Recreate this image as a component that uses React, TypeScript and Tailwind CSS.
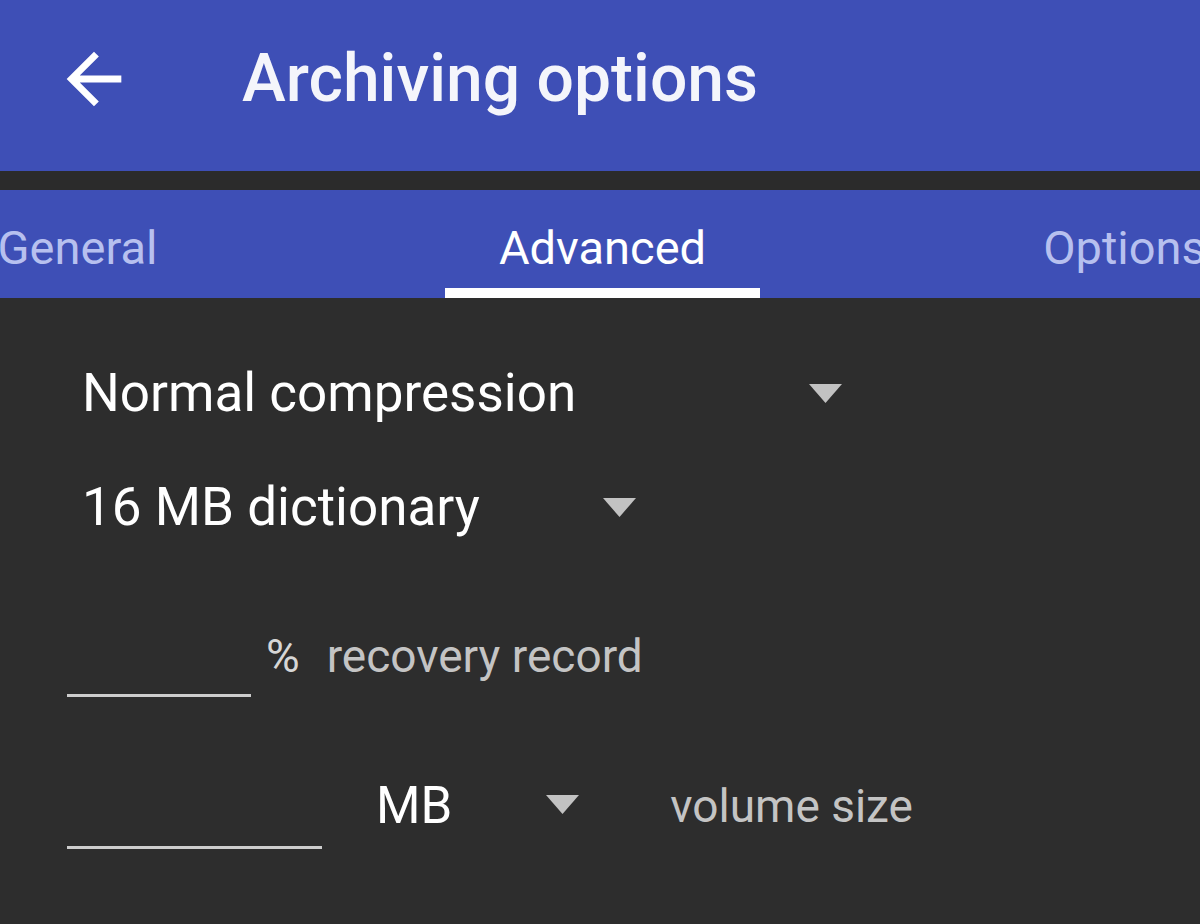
function Caret({ className = '' }: { className?: string }) {
  return (
    <svg width="33" height="19" viewBox="0 0 33 19" className={className}>
      <polygon points="0,0 33,0 16.5,19" fill="#c2c2c2" />
    </svg>
  );
}

export default function App() {
  return (
    <div className="w-[1200px] h-[924px] overflow-hidden bg-[#2d2d2d] font-['Roboto',sans-serif]">
      {/* app bar */}
      <div className="h-[171px] bg-[#3e4fb6] flex items-start">
        <svg width="82" height="82" viewBox="0 0 24 24" className="ml-[53px] mt-[38px] shrink-0">
          <path d="M20 11H7.83l5.59-5.59L12 4l-8 8 8 8 1.41-1.41L7.83 13H20v-2z" fill="#ffffff" />
        </svg>
        <h1 className="ml-[107px] mt-[46px] text-[66px] leading-none font-medium text-[#f4f5fb] whitespace-nowrap">
          Archiving options
        </h1>
      </div>

      <div className="h-[19px] bg-[#2b2b2b]" />

      {/* tabs */}
      <div className="h-[108px] bg-[#3e4fb6] flex gap-[210px] ml-[-80px]">
        <div className="w-[315px] shrink-0 flex flex-col items-center">
          <span className="mt-[34px] text-[47px] leading-none text-[#b7c0ef] whitespace-nowrap">General</span>
        </div>
        <div className="w-[315px] shrink-0 flex flex-col items-center">
          <span className="mt-[34px] text-[47px] leading-none text-white whitespace-nowrap">Advanced</span>
          <div className="mt-auto h-[10px] w-full bg-white" />
        </div>
        <div className="w-[315px] shrink-0 flex flex-col items-center">
          <span className="mt-[34px] ml-[-6px] text-[47px] leading-none text-[#b7c0ef] whitespace-nowrap">Options</span>
        </div>
      </div>

      {/* content */}
      <div className="pl-[67px] pt-[68px] flex flex-col">
        <div className="ml-[15px] w-[760px] h-[54px] flex items-center">
          <span className="text-[53px] leading-none text-white whitespace-nowrap">Normal compression</span>
          <Caret className="ml-auto" />
        </div>

        <div className="mt-[60px] ml-[15px] w-[554px] h-[54px] flex items-center">
          <span className="text-[53px] leading-none text-white whitespace-nowrap">16 MB dictionary</span>
          <Caret className="ml-auto" />
        </div>

        <div className="mt-[99px] flex items-start">
          <div className="w-[184px] h-[64px] border-b-[3px] border-[#cdcdcd]" />
          <span className="ml-[15px] text-[46px] leading-none text-[#d6d6d6]">%</span>
          <span className="ml-[27px] text-[46px] leading-none text-[#c4c4c4] whitespace-nowrap">recovery record</span>
        </div>

        <div className="mt-[83px] flex items-start">
          <div className="w-[255px] h-[69px] border-b-[3px] border-[#cdcdcd]" />
          <span className="ml-[54px] text-[51px] leading-none text-white">MB</span>
          <Caret className="ml-[94px] mt-[15px]" />
          <span className="ml-[91px] mt-[3px] text-[46px] leading-none text-[#c4c4c4] whitespace-nowrap">volume size</span>
        </div>
      </div>
    </div>
  );
}
